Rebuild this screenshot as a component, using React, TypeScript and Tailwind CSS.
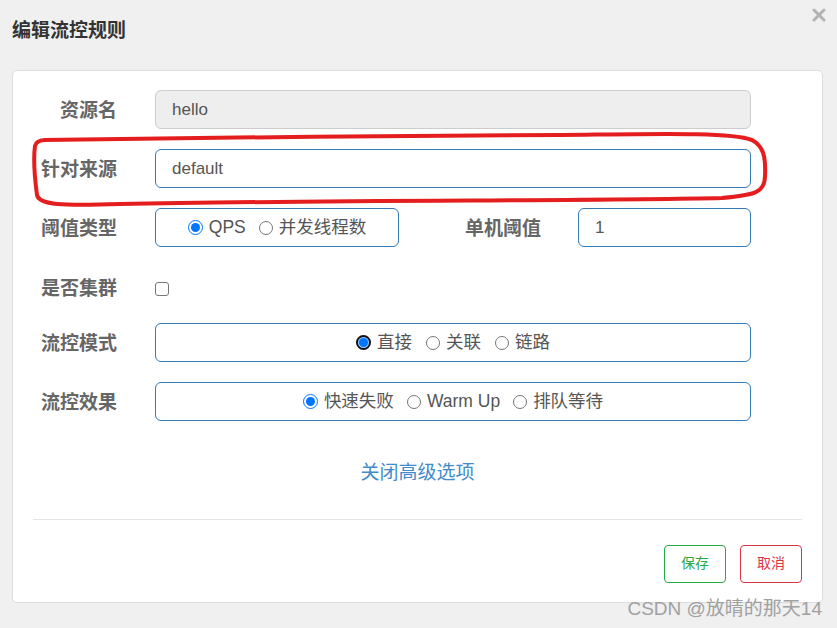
import React from "react"

const font = { fontFamily: '"Liberation Sans", "Noto Sans CJK SC", sans-serif' }

function Radio({ checked, focused, label }: { checked?: boolean; focused?: boolean; label: string }) {
  let dot
  if (focused) {
    dot = (
      <span className="w-[15px] h-[15px] rounded-full border-2 border-[#111] bg-[#0075ff] flex items-center justify-center">
        <span className="w-[9px] h-[9px] rounded-full bg-[#0075ff] ring-1 ring-white/60" />
      </span>
    )
  } else if (checked) {
    dot = (
      <span className="w-[15px] h-[15px] rounded-full border-[1.5px] border-[#0075ff] bg-white flex items-center justify-center">
        <span className="w-[9px] h-[9px] rounded-full bg-[#0075ff]" />
      </span>
    )
  } else {
    dot = <span className="w-[14px] h-[14px] rounded-full border border-[#767676] bg-white" />
  }
  return (
    <label className="flex items-center gap-[6px] text-[17.5px] text-[#555]">
      {dot}
      <span>{label}</span>
    </label>
  )
}

function Label({ children, className = "" }: { children: React.ReactNode; className?: string }) {
  return <div className={"text-right font-bold text-[19px] text-[#666] pt-[3px] " + className}>{children}</div>
}

export default function App() {
  return (
    <div className="relative w-[837px] h-[628px] bg-[#f0f0f0] overflow-hidden" style={font}>
      {/* header */}
      <div className="h-[70px] flex items-start justify-between pl-3 pr-[11px]">
        <h4 className="mt-[17px] text-[19px] font-bold text-[#333]">编辑流控规则</h4>
        <svg width="14" height="14" viewBox="0 0 14 14" className="mt-[8px]">
          <path d="M2 2 L12 12 M12 2 L2 12" stroke="#b3b3b3" strokeWidth="3" strokeLinecap="round" />
        </svg>
      </div>

      {/* body */}
      <div className="ml-3 mr-[14px] h-[533px] bg-white border border-[#ddd] rounded-[5px] pt-[19px] px-5">
        <div className="flex flex-col gap-5">
          <div className="flex items-center h-[39px]">
            <Label className="w-[84px]">资源名</Label>
            <div className="ml-[38px] w-[596px] h-[39px] bg-[#eee] border border-[#ccc] rounded-[6px] flex items-center px-4 text-[17px] text-[#555]">
              hello
            </div>
          </div>

          <div className="flex items-center h-[39px]">
            <Label className="w-[84px]">针对来源</Label>
            <div className="ml-[38px] w-[596px] h-[39px] bg-white border border-[#337ab7] rounded-[6px] flex items-center px-4 text-[17px] text-[#555]">
              default
            </div>
          </div>

          <div className="flex items-center h-[39px]">
            <Label className="w-[84px]">阈值类型</Label>
            <div className="ml-[38px] w-[244px] h-[39px] border border-[#337ab7] rounded-[6px] flex items-center justify-center gap-[13px]">
              <Radio checked label="QPS" />
              <Radio label="并发线程数" />
            </div>
            <Label className="w-[142px]">单机阈值</Label>
            <div className="ml-[37px] w-[173px] h-[39px] border border-[#337ab7] rounded-[6px] flex items-center px-4 text-[17px] text-[#555]">
              1
            </div>
          </div>

          <div className="flex items-center h-[36px] pt-[6px]">
            <Label className="w-[84px]">是否集群</Label>
            <span className="ml-[38px] mt-[2px] w-[14px] h-[14px] rounded-[3px] border border-[#767676] bg-white" />
          </div>

          <div className="flex items-center h-[39px]">
            <Label className="w-[84px]">流控模式</Label>
            <div className="ml-[38px] w-[596px] h-[39px] border border-[#337ab7] rounded-[6px] flex items-center justify-center gap-[14px]">
              <Radio checked focused label="直接" />
              <Radio label="关联" />
              <Radio label="链路" />
            </div>
          </div>

          <div className="flex items-center h-[39px]">
            <Label className="w-[84px]">流控效果</Label>
            <div className="ml-[38px] w-[596px] h-[39px] border border-[#337ab7] rounded-[6px] flex items-center justify-center gap-[13px]">
              <Radio checked label="快速失败" />
              <Radio label="Warm Up" />
              <Radio label="排队等待" />
            </div>
          </div>
        </div>

        <div className="mt-[38px] text-center">
          <a className="text-[19px] text-[#428bca] cursor-pointer">关闭高级选项</a>
        </div>

        <div className="mt-[31px] border-t border-[#e5e5e5]" />

        <div className="mt-[25px] flex justify-end gap-[14px]">
          <button className="w-[62px] h-[38px] border border-[#28a745] rounded-[4px] text-[14px] text-[#28a745]">保存</button>
          <button className="w-[62px] h-[38px] border border-[#dc3545] rounded-[4px] text-[14px] text-[#dc3545]">取消</button>
        </div>
      </div>

      {/* hand-drawn annotation */}
      <svg className="absolute inset-0 pointer-events-none" width="837" height="628">
        <path
          d="M 44 140 C 200 137, 400 136, 560 135 C 660 134, 730 132, 752 140 C 763 146, 766 156, 765 176 C 765 192, 756 195, 722 198 C 600 201, 320 200, 120 204 C 62 206, 39 205, 37 195 C 35 180, 33 160, 35 146 C 36 141, 40 140, 46 140"
          fill="none"
          stroke="#e41e1e"
          strokeWidth="4"
          strokeLinecap="round"
        />
      </svg>

      {/* watermark */}
      <div className="absolute right-[15px] top-[595px] text-[19px] text-[#a0a0a0]">CSDN @放晴的那天14</div>
    </div>
  )
}
